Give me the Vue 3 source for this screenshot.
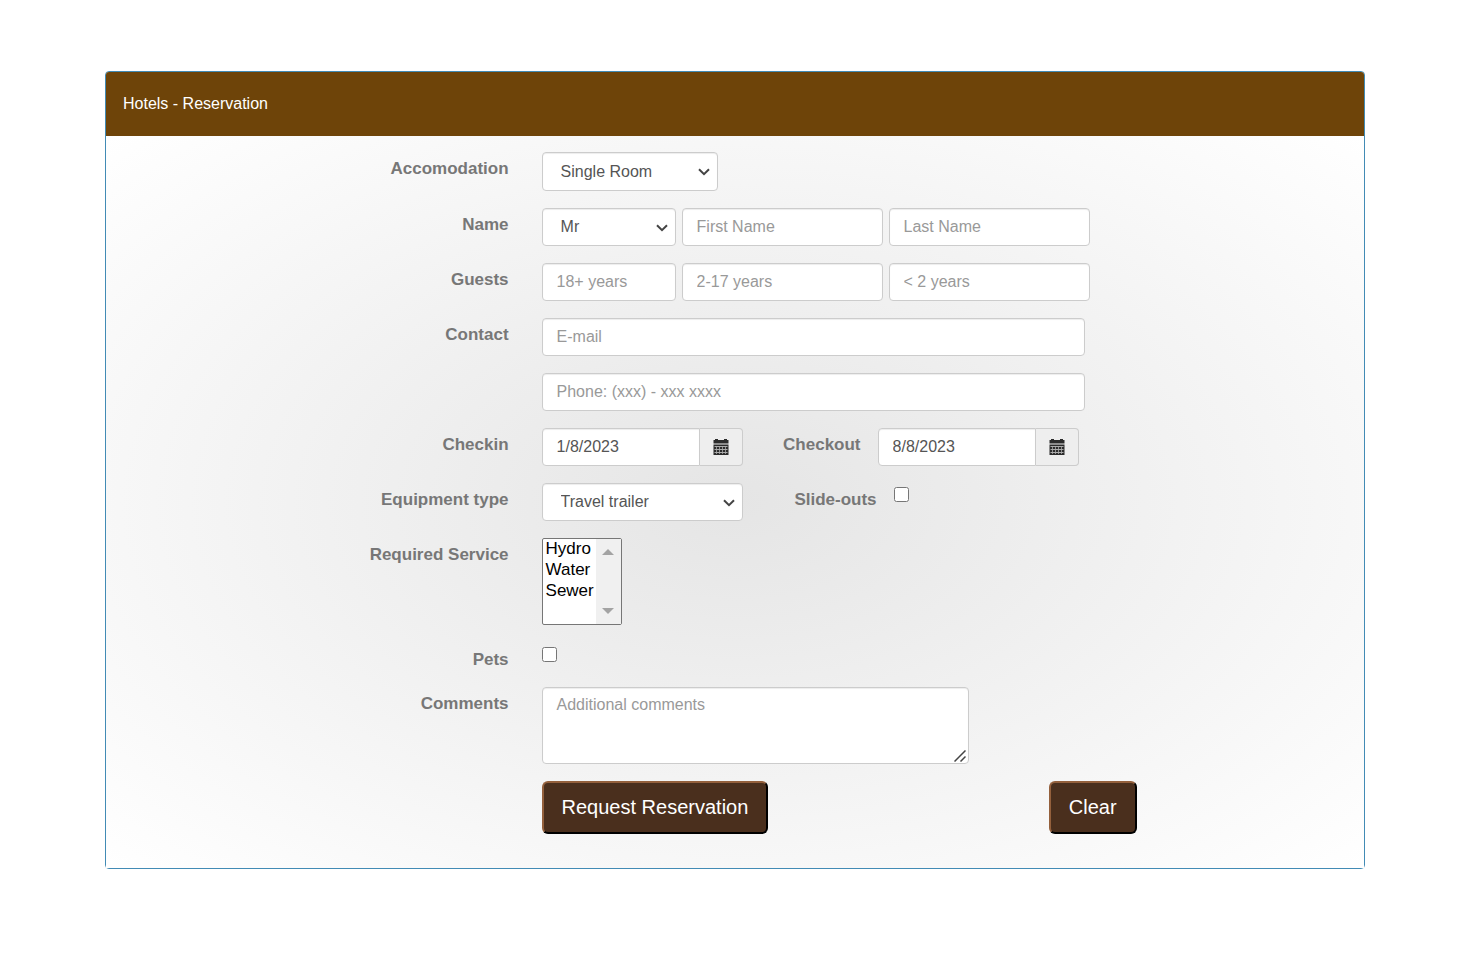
<template>
  <main class="container">
    <section class="panel">
      <header class="panel-heading">Hotels - Reservation</header>

      <form class="panel-body" @submit.prevent @reset.prevent="clear">
        <div class="form-row">
          <label class="row-label" for="accomodation">Accomodation</label>
          <div class="controls">
            <div class="select-box w-room tall">
              <select id="accomodation" v-model="form.accomodation" class="form-control">
                <option v-for="room in rooms" :key="room">{{ room }}</option>
              </select>
              <svg class="chevron" width="12" height="8" viewBox="0 0 12 8">
                <path d="M1 1.2l5 5 5-5" />
              </svg>
            </div>
          </div>
        </div>

        <div class="form-row">
          <label class="row-label" for="title">Name</label>
          <div class="controls">
            <div class="select-box w-small">
              <select id="title" v-model="form.title" class="form-control">
                <option v-for="title in titles" :key="title">{{ title }}</option>
              </select>
              <svg class="chevron" width="12" height="8" viewBox="0 0 12 8">
                <path d="M1 1.2l5 5 5-5" />
              </svg>
            </div>
            <input v-model="form.firstName" type="text" class="form-control w-medium" placeholder="First Name" aria-label="First Name" />
            <input v-model="form.lastName" type="text" class="form-control w-medium" placeholder="Last Name" aria-label="Last Name" />
          </div>
        </div>

        <div class="form-row">
          <label class="row-label" for="adults">Guests</label>
          <div class="controls">
            <input id="adults" v-model="form.adults" type="text" class="form-control w-small" placeholder="18+ years" />
            <input v-model="form.children" type="text" class="form-control w-medium" placeholder="2-17 years" aria-label="2-17 years" />
            <input v-model="form.infants" type="text" class="form-control w-medium" placeholder="&lt; 2 years" aria-label="&lt; 2 years" />
          </div>
        </div>

        <div class="form-row">
          <label class="row-label" for="email">Contact</label>
          <div class="controls">
            <input id="email" v-model="form.email" type="text" class="form-control w-large" placeholder="E-mail" />
          </div>
        </div>

        <div class="form-row">
          <span class="row-label"></span>
          <div class="controls">
            <input v-model="form.phone" type="text" class="form-control w-large" placeholder="Phone: (xxx) - xxx xxxx" aria-label="Phone" />
          </div>
        </div>

        <div class="form-row">
          <label class="row-label" for="checkin">Checkin</label>
          <div class="controls joined">
            <div v-for="date in dates" :key="date.key" class="date-field">
              <label v-if="date.label" class="inner-label checkout-label" :for="date.key">{{ date.label }}</label>
              <div class="input-group w-medium">
                <input :id="date.key" v-model="form[date.key]" type="text" class="form-control" />
                <span class="addon">
                  <!-- calendar glyph -->
                  <svg width="16" height="16" viewBox="0 0 16 16">
                    <path fill="#2b2b2b" d="M2 0h3v1h6V0h3v1h1.500v3.500H.5V1H2zM.5 5.500h15V16H.5z" />
                    <path stroke="#aaa" d="M1.500 7.500h13M1.500 10.500h13M1.500 13.500h13" />
                    <path stroke="#aaa" stroke-width=".8" d="M3.500 7v8M6.500 7v8M9.500 7v8M12.500 7v8" />
                  </svg>
                </span>
              </div>
            </div>
          </div>
        </div>

        <div class="form-row">
          <label class="row-label" for="equipment">Equipment type</label>
          <div class="controls joined">
            <div class="select-box w-medium">
              <select id="equipment" v-model="form.equipment" class="form-control">
                <option v-for="item in equipment" :key="item">{{ item }}</option>
              </select>
              <svg class="chevron" width="12" height="8" viewBox="0 0 12 8">
                <path d="M1 1.2l5 5 5-5" />
              </svg>
            </div>
            <label class="inner-label slide-label" for="slideOuts">Slide-outs</label>
            <input id="slideOuts" v-model="form.slideOuts" type="checkbox" class="checkbox" />
          </div>
        </div>

        <div class="form-row">
          <label class="row-label" for="services">Required Service</label>
          <div class="controls">
            <div class="list-box">
              <select id="services" v-model="form.services" class="service-list" multiple size="4">
                <option v-for="service in services" :key="service">{{ service }}</option>
              </select>
              <span class="scroll-track">
                <svg width="12" height="6" viewBox="0 0 12 6"><path d="M6 0l6 6H0z" /></svg>
                <svg width="12" height="6" viewBox="0 0 12 6"><path d="M0 0h12L6 6z" /></svg>
              </span>
            </div>
          </div>
        </div>

        <div class="form-row">
          <label class="row-label" for="pets">Pets</label>
          <div class="controls">
            <input id="pets" v-model="form.pets" type="checkbox" class="checkbox" />
          </div>
        </div>

        <div class="form-row">
          <label class="row-label" for="comments">Comments</label>
          <div class="controls">
            <div class="comments-box">
              <textarea id="comments" v-model="form.comments" class="form-control comments" placeholder="Additional comments"></textarea>
              <svg class="grip" width="12" height="12" viewBox="0 0 12 12">
                <path d="M.5 11.500l11-11M6.500 11.500l5-5" />
              </svg>
            </div>
          </div>
        </div>

        <div class="form-row">
          <span class="row-label"></span>
          <div class="controls actions">
            <button type="submit" class="btn">Request Reservation</button>
            <button type="reset" class="btn">Clear</button>
          </div>
        </div>
      </form>
    </section>
  </main>
</template>

<script setup>
import { reactive } from 'vue'

const rooms = ['Single Room']
const titles = ['Mr']
const equipment = ['Travel trailer']
const services = ['Hydro', 'Water', 'Sewer']
const dates = [
  { key: 'checkin', label: '' },
  { key: 'checkout', label: 'Checkout' }
]

const initial = () => ({
  accomodation: 'Single Room',
  title: 'Mr',
  firstName: '',
  lastName: '',
  adults: '',
  children: '',
  infants: '',
  email: '',
  phone: '',
  checkin: '1/8/2023',
  checkout: '8/8/2023',
  equipment: 'Travel trailer',
  slideOuts: false,
  services: [],
  pets: false,
  comments: ''
})

const form = reactive(initial())

function clear() {
  Object.assign(form, initial())
}
</script>

<style>
body {
  background: #fff;
}
</style>

<style scoped>
* {
  box-sizing: border-box;
}

.container {
  padding: 71px 119px 71px 105px;
  font-family: "Liberation Sans", Arial, sans-serif;
  font-size: 16px;
  line-height: 22px;
  color: #555;
}

.panel {
  border: 1px solid #428bb5;
  border-radius: 4px;
}

.panel-heading {
  padding: 21px 17px;
  border-radius: 3px 3px 0 0;
  background: #6e4409;
  color: #fff;
}

.panel-body {
  display: flex;
  flex-direction: column;
  gap: 17px;
  padding: 16px 0 34px;
  background: radial-gradient(ellipse at center, #e5e5e5 0%, #fff 100%);
}

.form-row {
  display: flex;
  gap: 33px;
}

.row-label {
  flex: 0 0 32%;
}

.row-label,
.inner-label {
  padding-top: 7px;
  font-size: 17px;
  font-weight: bold;
  line-height: 20px;
  text-align: right;
  color: #777;
}

.controls {
  display: flex;
  align-items: flex-start;
  gap: 6px;
}

.controls.joined {
  gap: 0;
}

.form-control {
  height: 38px;
  margin: 0;
  padding: 6px 14px;
  border: 1px solid #ccc;
  border-radius: 4px;
  background: #fff;
  box-shadow: inset 0 1px 1px rgba(0, 0, 0, 0.075);
  font: inherit;
  color: #555;
}

.form-control::placeholder {
  color: #999;
}

.select-box {
  position: relative;
}

.select-box .form-control {
  display: block;
  width: 100%;
  padding: 6px 28px 6px 18px;
  appearance: none;
}

.select-box.tall .form-control {
  height: 39px;
}

.chevron {
  position: absolute;
  top: 16px;
  right: 8px;
  pointer-events: none;
}

.chevron path {
  fill: none;
  stroke: #444;
  stroke-width: 2;
}

.w-small {
  width: 134px;
}

.w-room {
  width: 176px;
}

.w-medium {
  width: 201px;
}

.w-large {
  width: 543px;
}

.date-field {
  display: flex;
}

.checkout-label {
  width: 118px;
  margin-right: 17px;
}

.slide-label {
  width: 134px;
  margin-right: 17px;
}

.input-group {
  display: flex;
}

.input-group .form-control {
  flex: 1;
  min-width: 0;
  border-radius: 4px 0 0 4px;
}

.addon {
  display: flex;
  align-items: center;
  justify-content: center;
  width: 43px;
  border: 1px solid #ccc;
  border-left: 0;
  border-radius: 0 4px 4px 0;
  background: #eee;
}

.checkbox {
  width: 15px;
  height: 15px;
  margin: 4px 0 8px;
}

.list-box {
  position: relative;
  margin-bottom: 1px;
}

.service-list {
  display: block;
  width: 80px;
  height: 87px;
  margin: 0;
  border: 1px solid #767676;
  border-radius: 2px;
  background: #fff;
  font: inherit;
  font-size: 17px;
  color: #000;
}

.service-list option {
  min-height: 21px;
  padding: 0 3px;
}

/* always visible, inactive scroll bar of the list */
.scroll-track {
  position: absolute;
  top: 1px;
  right: 1px;
  bottom: 1px;
  display: flex;
  flex-direction: column;
  align-items: center;
  justify-content: space-between;
  width: 25px;
  padding: 10px 0;
  background: #f0f0f0;
}

.scroll-track path {
  fill: #a3a3a3;
}

.comments-box {
  position: relative;
}

.comments {
  display: block;
  width: 427px;
  height: 77px;
  resize: both;
}

.comments::-webkit-resizer {
  background: transparent;
}

.grip {
  position: absolute;
  right: 3px;
  bottom: 2px;
  pointer-events: none;
}

.grip path {
  fill: none;
  stroke: #444;
  stroke-width: 1.5;
}

.actions {
  width: 595px;
  justify-content: space-between;
}

.btn {
  height: 53px;
  padding: 0 18px 2px;
  border: 2px solid;
  border-color: #94603c #000 #000 #94603c;
  border-radius: 6px;
  background: #4a2f1d;
  font: inherit;
  font-size: 20px;
  color: #fff;
}
</style>
